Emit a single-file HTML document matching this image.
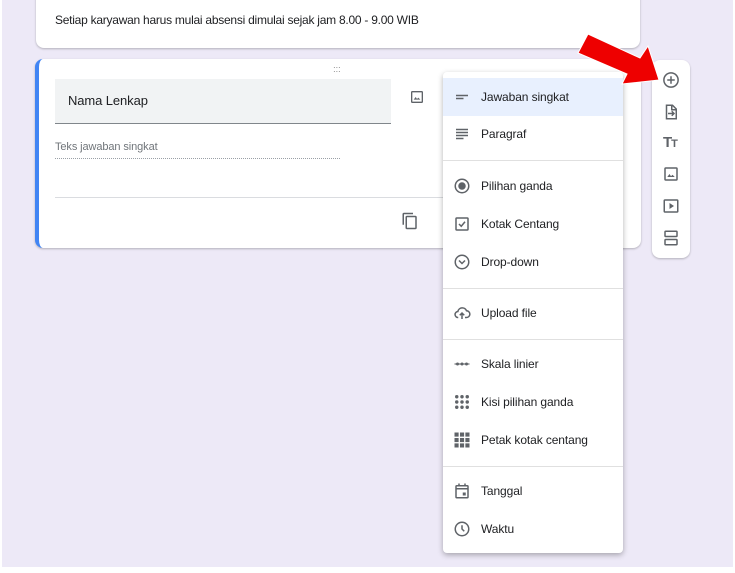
<!DOCTYPE html>
<html><head><meta charset="utf-8"><style>
*{box-sizing:border-box;margin:0;padding:0}
body{width:735px;height:573px;background:#fff;font-family:"Liberation Sans",Arial,sans-serif;position:relative;overflow:hidden;color:#202124}
.bg{position:absolute;left:2px;top:0;width:731px;height:567px;background:#ede9f7}
.card{position:absolute;background:#fff;border-radius:8px;box-shadow:0 1px 2px rgba(0,0,0,.25)}
.ab{position:absolute}
.mi{position:absolute;left:0;width:180px;height:38px;display:flex;align-items:center;font-size:12px;color:#202124;letter-spacing:-0.1px}
.mi svg{position:absolute;left:10px;top:10px}
.mi span{position:absolute;left:38px}
.sep{position:absolute;left:0;width:180px;height:1px;background:#e0e0e0}
.tb svg{position:absolute;left:10px}
</style></head><body>
<div class="bg"></div>
<div class="card" style="left:36px;top:-10px;width:604px;height:58px;border-radius:0 0 8px 8px"></div>
<div class="ab" style="left:55px;top:13px;font-size:12px;letter-spacing:-0.25px">Setiap karyawan harus mulai absensi dimulai sejak jam 8.00 - 9.00 WIB</div>

<div class="card" style="left:35px;top:59px;width:606px;height:189px;border-left:4px solid #4285f4"></div>
<div class="ab" style="left:333px;top:65px;font-size:9px;color:#888;line-height:4px">∙∙∙<br>∙∙∙</div>
<div class="ab" style="left:55px;top:79px;width:336px;height:45px;background:#f1f3f4;border-bottom:1px solid #80868b"></div>
<div class="ab" style="left:68px;top:93px;font-size:13px;letter-spacing:-0.1px">Nama Lenkap</div>
<svg class="ab" style="left:409px;top:89px" width="16" height="16" viewBox="0 0 24 24"><path fill="#5f6368" d="M19 3H5a2 2 0 0 0-2 2v14a2 2 0 0 0 2 2h14a2 2 0 0 0 2-2V5a2 2 0 0 0-2-2zm0 16H5V5h14zM7 16l3-4 2 3 2-2 3 3z"/></svg>
<div class="ab" style="left:55px;top:141px;font-size:11px;color:#70757a;letter-spacing:-0.1px">Teks jawaban singkat</div>
<div class="ab" style="left:55px;top:158px;width:285px;border-top:1px dotted #9aa0a6"></div>
<div class="ab" style="left:55px;top:197px;width:390px;height:1px;background:#dadce0"></div>
<svg class="ab" style="left:401px;top:211px" width="18" height="20" viewBox="0 0 24 24"><path fill="#5f6368" d="M16 1H4a2 2 0 0 0-2 2v14h2V3h12zm3 4H8a2 2 0 0 0-2 2v14a2 2 0 0 0 2 2h11a2 2 0 0 0 2-2V7a2 2 0 0 0-2-2zm0 16H8V7h11z"/></svg>

<div class="card" style="left:443px;top:72px;width:180px;height:481px;border-radius:4px;box-shadow:0 2px 6px rgba(0,0,0,.3)">
<div class="mi" style="top:6px;background:#e8f0fe"><svg width="18" height="18" viewBox="0 0 24 24"><path fill="#5f6368" d="M4 9h16v2H4zm0 4h10v2H4z"/></svg><span>Jawaban singkat</span></div>
<div class="mi" style="top:43px"><svg width="18" height="18" viewBox="0 0 24 24"><path fill="#5f6368" d="M4 5h16v2H4zm0 4h16v2H4zm0 4h16v2H4zm0 4h10v2H4z"/></svg><span>Paragraf</span></div>
<div class="sep" style="top:88px"></div>
<div class="mi" style="top:95px"><svg width="18" height="18" viewBox="0 0 24 24"><circle cx="12" cy="12" r="9" fill="none" stroke="#5f6368" stroke-width="2"/><circle cx="12" cy="12" r="5" fill="#5f6368"/></svg><span>Pilihan ganda</span></div>
<div class="mi" style="top:133px"><svg width="18" height="18" viewBox="0 0 24 24"><rect x="4" y="4" width="16" height="16" rx="1" fill="none" stroke="#5f6368" stroke-width="2"/><path d="M8 12l3 3 5-6" fill="none" stroke="#5f6368" stroke-width="2"/></svg><span>Kotak Centang</span></div>
<div class="mi" style="top:171px"><svg width="18" height="18" viewBox="0 0 24 24"><circle cx="12" cy="12" r="9" fill="none" stroke="#5f6368" stroke-width="2"/><path d="M8 10l4 4 4-4" fill="none" stroke="#5f6368" stroke-width="2"/></svg><span>Drop-down</span></div>
<div class="sep" style="top:216px"></div>
<div class="mi" style="top:222px"><svg width="18" height="18" viewBox="0 0 24 24"><path d="M7 18a4 4 0 0 1-.5-8A6 6 0 0 1 18 9a4.5 4.5 0 0 1 0 9h-2M12 20v-8m-3 3l3-3 3 3" fill="none" stroke="#5f6368" stroke-width="2"/></svg><span>Upload file</span></div>
<div class="sep" style="top:267px"></div>
<div class="mi" style="top:273px"><svg width="18" height="18" viewBox="0 0 24 24"><path d="M2 12h20" stroke="#5f6368" stroke-width="1.5"/><circle cx="6" cy="12" r="2" fill="#5f6368"/><circle cx="12" cy="12" r="2" fill="#5f6368"/><circle cx="18" cy="12" r="2" fill="#5f6368"/></svg><span>Skala linier</span></div>
<div class="mi" style="top:311px"><svg width="18" height="18" viewBox="0 0 24 24" fill="#5f6368"><circle cx="5" cy="5" r="2.3"/><circle cx="12" cy="5" r="2.3"/><circle cx="19" cy="5" r="2.3"/><circle cx="5" cy="12" r="2.3"/><circle cx="12" cy="12" r="2.3"/><circle cx="19" cy="12" r="2.3"/><circle cx="5" cy="19" r="2.3"/><circle cx="12" cy="19" r="2.3"/><circle cx="19" cy="19" r="2.3"/></svg><span>Kisi pilihan ganda</span></div>
<div class="mi" style="top:349px"><svg width="18" height="18" viewBox="0 0 24 24" fill="#5f6368"><rect x="2" y="2" width="5.5" height="5.5"/><rect x="9.3" y="2" width="5.5" height="5.5"/><rect x="16.5" y="2" width="5.5" height="5.5"/><rect x="2" y="9.3" width="5.5" height="5.5"/><rect x="9.3" y="9.3" width="5.5" height="5.5"/><rect x="16.5" y="9.3" width="5.5" height="5.5"/><rect x="2" y="16.5" width="5.5" height="5.5"/><rect x="9.3" y="16.5" width="5.5" height="5.5"/><rect x="16.5" y="16.5" width="5.5" height="5.5"/></svg><span>Petak kotak centang</span></div>
<div class="sep" style="top:394px"></div>
<div class="mi" style="top:400px"><svg width="18" height="18" viewBox="0 0 24 24"><rect x="4" y="5" width="16" height="16" rx="1" fill="none" stroke="#5f6368" stroke-width="2"/><path d="M4 9h16M8 2v4M16 2v4" stroke="#5f6368" stroke-width="2"/><rect x="13" y="14" width="4" height="4" fill="#5f6368"/></svg><span>Tanggal</span></div>
<div class="mi" style="top:438px"><svg width="18" height="18" viewBox="0 0 24 24"><circle cx="12" cy="12" r="9" fill="none" stroke="#5f6368" stroke-width="2"/><path d="M12 7v5l3 3" fill="none" stroke="#5f6368" stroke-width="2"/></svg><span>Waktu</span></div>
</div>

<div class="card tb" style="left:652px;top:60px;width:38px;height:198px">
<svg style="top:11px" width="18" height="18" viewBox="0 0 24 24"><circle cx="12" cy="12" r="9.5" fill="none" stroke="#5f6368" stroke-width="2"/><path d="M12 7v10M7 12h10" stroke="#5f6368" stroke-width="2"/></svg>
<svg style="top:43px" width="18" height="18" viewBox="0 0 24 24"><path d="M6 3h8l5 5v13H6zM13 3v6h6M8 14h8m-3-3l3 3-3 3" fill="none" stroke="#5f6368" stroke-width="2"/></svg>
<div style="position:absolute;left:11px;top:74px;font-size:15px;font-weight:bold;color:#5f6368;letter-spacing:-1px">T<span style="font-size:11px">T</span></div>
<svg style="top:105px" width="18" height="18" viewBox="0 0 24 24"><path fill="#5f6368" d="M19 3H5a2 2 0 0 0-2 2v14a2 2 0 0 0 2 2h14a2 2 0 0 0 2-2V5a2 2 0 0 0-2-2zm0 16H5V5h14zM7 16l3-4 2 3 2-2 3 3z"/></svg>
<svg style="top:137px" width="18" height="18" viewBox="0 0 24 24"><rect x="3" y="4" width="18" height="16" rx="1" fill="none" stroke="#5f6368" stroke-width="2"/><path d="M10 8v8l6-4z" fill="#5f6368"/></svg>
<svg style="top:169px" width="18" height="18" viewBox="0 0 24 24"><rect x="4" y="3" width="16" height="7" rx="1" fill="none" stroke="#5f6368" stroke-width="2"/><rect x="4" y="14" width="16" height="7" rx="1" fill="none" stroke="#5f6368" stroke-width="2"/></svg>
</div>

<svg class="ab" style="left:0;top:0" width="735" height="120"><path d="M588 34 L578 53 L627 74 L622 84 L659 80 L648 46 L640 58 Z" fill="#ee0000" stroke="#fff" stroke-width="1"/></svg>
</body></html>
